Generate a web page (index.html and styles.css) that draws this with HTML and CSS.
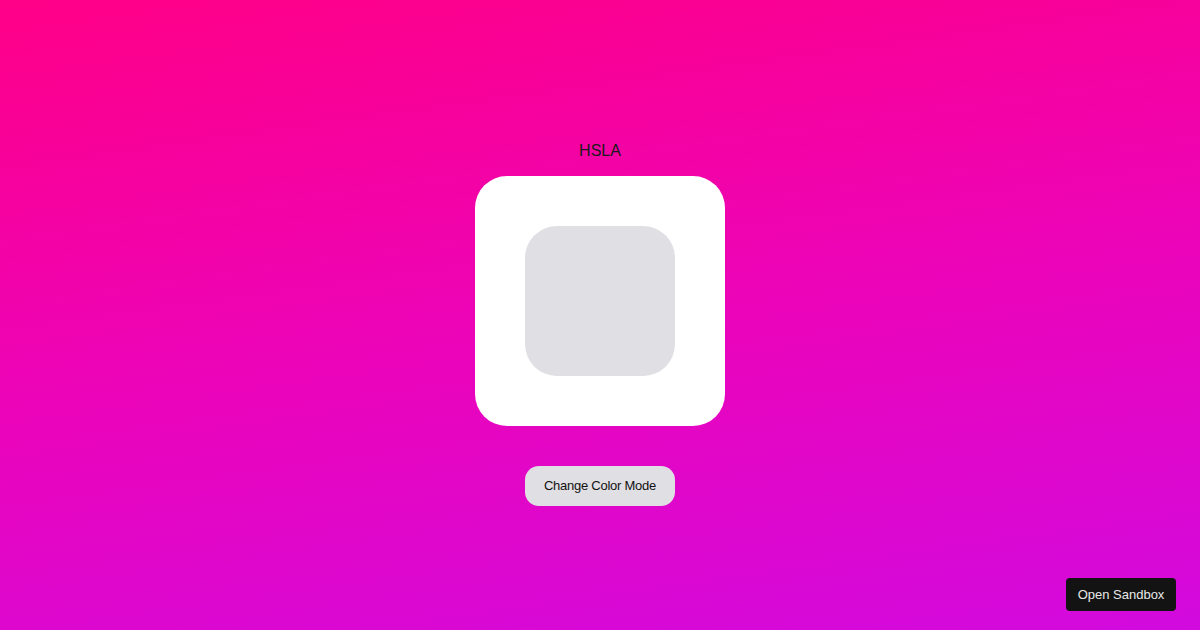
FILE: index.html
```html
<!DOCTYPE html>
<html>
<head>
<meta charset="utf-8">
<link rel="stylesheet" href="styles.css">
</head>
<body>
<main class="stage">
  <div class="label">HSLA</div>
  <div class="card"><div class="swatch"></div></div>
  <button class="mode-btn">Change Color Mode</button>
</main>
<button class="sandbox-btn">Open Sandbox</button>
</body>
</html>
```
FILE: styles.css
```css
html, body {
  margin: 0;
  padding: 0;
  width: 1200px;
  height: 630px;
  overflow: hidden;
}
body {
  background: linear-gradient(172deg, #ff0087 0%, #ec04b8 50%, #d20ade 100%);
  font-family: "Liberation Sans", Arial, sans-serif;
  position: relative;
}
.stage {
  display: flex;
  flex-direction: column;
  align-items: center;
  padding-top: 142px;
}
.label {
  font-size: 16px;
  line-height: 18px;
  color: #1a1a1a;
  margin-bottom: 16px;
}
.card {
  width: 250px;
  height: 250px;
  background: #fff;
  border-radius: 32px;
  display: flex;
  align-items: center;
  justify-content: center;
}
.swatch {
  width: 150px;
  height: 150px;
  border-radius: 32px;
  background: #e0dfe4;
}
.mode-btn {
  margin-top: 40px;
  width: 150px;
  height: 40px;
  border: none;
  border-radius: 14px;
  background: #e0dfe4;
  font-family: "Liberation Sans", Arial, sans-serif;
  font-size: 13px;
  letter-spacing: -0.25px;
  color: #111;
  padding: 0 0 2px 0;
}
.sandbox-btn {
  position: absolute;
  right: 24px;
  bottom: 19px;
  width: 110px;
  height: 33px;
  border: none;
  border-radius: 4px;
  background: #131313;
  color: #e8e8e8;
  font-family: "Liberation Sans", Arial, sans-serif;
  font-size: 13px;
  padding: 0;
}
```
